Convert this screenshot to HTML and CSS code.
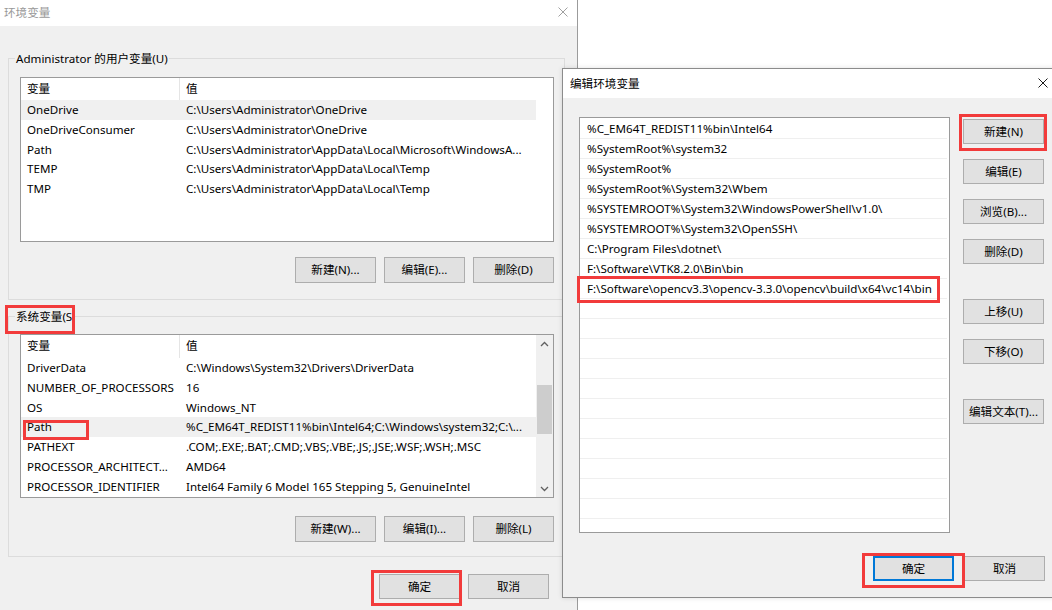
FILE: index.html
```html
<!DOCTYPE html>
<html lang="zh-CN">
<head>
<meta charset="utf-8">
<title>环境变量</title>
<link rel="stylesheet" href="styles.css">
</head>
<body>
<div class="desk">

  <div class="win win-env">
    <div class="titlebar">
      <span class="title">环境变量</span>
      <svg class="close" width="10" height="10" viewBox="0 0 10 10"><path d="M0.5 0.5L9.5 9.5M9.5 0.5L0.5 9.5" stroke="#a0a0a0" stroke-width="1" fill="none"/></svg>
    </div>
    <div class="env-body">
      <div class="group group-user">
        <span class="legend">Administrator 的用户变量(U)</span>
        <div class="list list-user">
          <div class="cols">
            <div class="lhead"><div class="c1">变量</div><div class="c2">值</div></div>
            <div class="row hot"><div class="c1">OneDrive</div><div class="c2">C:\Users\Administrator\OneDrive</div></div>
            <div class="row"><div class="c1">OneDriveConsumer</div><div class="c2">C:\Users\Administrator\OneDrive</div></div>
            <div class="row"><div class="c1">Path</div><div class="c2">C:\Users\Administrator\AppData\Local\Microsoft\WindowsA...</div></div>
            <div class="row"><div class="c1">TEMP</div><div class="c2">C:\Users\Administrator\AppData\Local\Temp</div></div>
            <div class="row"><div class="c1">TMP</div><div class="c2">C:\Users\Administrator\AppData\Local\Temp</div></div>
          </div>
          <div class="side"></div>
        </div>
        <div class="btns">
          <button class="btn">新建(N)...</button>
          <button class="btn">编辑(E)...</button>
          <button class="btn">删除(D)</button>
        </div>
      </div>

      <div class="group group-sys">
        <span class="legend">系统变量(S</span>
        <div class="list list-sys">
          <div class="cols">
            <div class="lhead"><div class="c1">变量</div><div class="c2">值</div></div>
            <div class="row"><div class="c1">DriverData</div><div class="c2">C:\Windows\System32\Drivers\DriverData</div></div>
            <div class="row"><div class="c1">NUMBER_OF_PROCESSORS</div><div class="c2">16</div></div>
            <div class="row"><div class="c1">OS</div><div class="c2">Windows_NT</div></div>
            <div class="row hot"><div class="c1">Path</div><div class="c2">%C_EM64T_REDIST11%bin\Intel64;C:\Windows\system32;C:\...</div></div>
            <div class="row"><div class="c1">PATHEXT</div><div class="c2">.COM;.EXE;.BAT;.CMD;.VBS;.VBE;.JS;.JSE;.WSF;.WSH;.MSC</div></div>
            <div class="row"><div class="c1">PROCESSOR_ARCHITECT...</div><div class="c2">AMD64</div></div>
            <div class="row"><div class="c1">PROCESSOR_IDENTIFIER</div><div class="c2">Intel64 Family 6 Model 165 Stepping 5, GenuineIntel</div></div>
          </div>
          <div class="side vscroll">
            <div class="sb-btn"><svg width="9" height="6" viewBox="0 0 9 6"><path d="M1 5L4.5 1.5L8 5" stroke="#606060" stroke-width="1.3" fill="none"/></svg></div>
            <div class="sb-track"><div class="sb-thumb"></div></div>
            <div class="sb-btn"><svg width="9" height="6" viewBox="0 0 9 6"><path d="M1 1L4.5 4.5L8 1" stroke="#606060" stroke-width="1.3" fill="none"/></svg></div>
          </div>
        </div>
        <div class="btns">
          <button class="btn">新建(W)...</button>
          <button class="btn">编辑(I)...</button>
          <button class="btn">删除(L)</button>
        </div>
      </div>

      <div class="footer env-footer">
        <button class="btn">确定</button>
        <button class="btn">取消</button>
      </div>
    </div>
  </div>

  <div class="win win-edit">
    <div class="titlebar">
      <span class="title">编辑环境变量</span>
      <svg class="close" width="10" height="10" viewBox="0 0 10 10"><path d="M0.5 0.5L9.5 9.5M9.5 0.5L0.5 9.5" stroke="#1a1a1a" stroke-width="1" fill="none"/></svg>
    </div>
    <div class="edit-body">
      <div class="edit-main">
        <div class="plist">
          <div class="prow">%C_EM64T_REDIST11%bin\Intel64</div>
          <div class="prow">%SystemRoot%\system32</div>
          <div class="prow">%SystemRoot%</div>
          <div class="prow">%SystemRoot%\System32\Wbem</div>
          <div class="prow">%SYSTEMROOT%\System32\WindowsPowerShell\v1.0\</div>
          <div class="prow">%SYSTEMROOT%\System32\OpenSSH\</div>
          <div class="prow">C:\Program Files\dotnet\</div>
          <div class="prow">F:\Software\VTK8.2.0\Bin\bin</div>
          <div class="prow">F:\Software\opencv3.3\opencv-3.3.0\opencv\build\x64\vc14\bin</div>
          <div class="prow"></div>
          <div class="prow"></div>
          <div class="prow"></div>
          <div class="prow"></div>
          <div class="prow"></div>
          <div class="prow"></div>
          <div class="prow"></div>
          <div class="prow"></div>
          <div class="prow"></div>
          <div class="prow"></div>
          <div class="prow"></div>
        </div>
        <div class="side-btns">
          <button class="btn">新建(N)</button>
          <button class="btn">编辑(E)</button>
          <button class="btn">浏览(B)...</button>
          <button class="btn">删除(D)</button>
          <button class="btn sep">上移(U)</button>
          <button class="btn">下移(O)</button>
          <button class="btn sep">编辑文本(T)...</button>
        </div>
      </div>
      <div class="footer edit-footer">
        <button class="btn default">确定</button>
        <button class="btn">取消</button>
      </div>
    </div>
  </div>

  <div class="mark mark-sys"></div>
  <div class="mark mark-path"></div>
  <div class="mark mark-ok1"></div>
  <div class="mark mark-opencv"></div>
  <div class="mark mark-new"></div>
  <div class="mark mark-ok2"></div>
</div>
</body>
</html>
```

FILE: styles.css
```css
* { box-sizing: border-box; }
html, body { margin: 0; padding: 0; }
body {
  width: 1052px;
  height: 610px;
  overflow: hidden;
  background: #ffffff;
  font-family: "Noto Sans", "Noto Sans CJK SC", sans-serif;
  font-size: 11.6px;
  color: #000;
}
.desk {
  position: relative;
  width: 1052px;
  height: 610px;
  overflow: hidden;
  background: #ffffff;
}

/* windows */
.win {
  position: absolute;
  display: flex;
  flex-direction: column;
  background: #f0f0f0;
  border: 1px solid #9b9b9b;
}
.win-env { left: -1px; top: -1px; width: 579px; height: 630px; }
.win-edit {
  left: 562px; top: 68px; width: 498px; height: 530px;
  border-color: #8c8c8c;
  box-shadow: 0 0 5px rgba(0,0,0,0.12);
}
.titlebar {
  flex: none;
  display: flex;
  align-items: center;
  justify-content: space-between;
  background: #ffffff;
}
.win-env .titlebar { height: 26px; padding: 0 9px 2px 4px; }
.win-env .title { color: #999999; }
.win-edit .titlebar { height: 29px; padding: 0 11px 1px 7px; }
.close { display: block; flex: none; }

/* left dialog body */
.env-body { padding: 32px 0 0 8px; display: flex; flex-direction: column; }
.group {
  position: relative;
  width: 557px;
  border: 1px solid #dcdcdc;
  display: flex;
  flex-direction: column;
  padding-left: 11px;
}
.group-user { height: 242px; padding-top: 18px; }
.group-sys { height: 241px; padding-top: 17px; margin-top: 16px; }
.legend {
  position: absolute;
  left: 6px;
  top: -8px;
  padding: 0 1px;
  line-height: 16px;
  background: #f0f0f0;
  white-space: nowrap;
}
.list {
  width: 534px;
  background: #ffffff;
  border: 1px solid #9a9a9a;
  display: flex;
  overflow: hidden;
}
.list-user { height: 165px; }
.list-sys { height: 164px; }
.cols { width: 515px; flex: none; }
.side { width: 17px; flex: none; }
.lhead { display: flex; height: 22px; line-height: 21px; }
.list-sys .lhead { height: 23px; line-height: 22px; }
.lhead .c1 { border-right: 1px solid #e5e5e5; }
.row { display: flex; height: 19.8px; line-height: 19.8px; white-space: nowrap; }
.row.hot { background: #f0f0f0; }
.c1 { width: 159px; flex: none; padding-left: 6px; overflow: hidden; white-space: nowrap; }
.c2 { flex: 1; padding-left: 6px; overflow: hidden; white-space: nowrap; }

.vscroll { background: #f0f0f0; display: flex; flex-direction: column; }
.sb-btn { height: 17px; flex: none; display: flex; align-items: center; justify-content: center; }
.sb-btn svg { display: block; }
.sb-track { flex: 1; padding: 0 1px; }
.sb-thumb { margin-top: 33px; height: 49px; background: #cdcdcd; }

.btns { display: flex; justify-content: flex-end; gap: 8px; width: 534px; }
.group-user .btns { margin-top: 15px; }
.group-sys .btns { margin-top: 18px; }

.btn {
  width: 81px;
  height: 26px;
  padding: 0;
  margin: 0;
  background: #e1e1e1;
  border: 1px solid #adadad;
  font: inherit;
  color: #000;
  text-align: center;
  line-height: 22px;
  white-space: nowrap;
}
.footer { display: flex; justify-content: flex-end; }
.footer .btn { height: 25px; }
.env-footer { margin-top: 17px; gap: 8px; padding-right: 28px; width: 569px; }

/* edit dialog */
.edit-body { width: 482px; padding: 19px 0 0 16px; display: flex; flex-direction: column; }
.edit-main { display: flex; gap: 13px; width: 466px; }
.plist {
  width: 371px;
  height: 416px;
  flex: none;
  background: #ffffff;
  border: 1px solid #9a9a9a;
  padding: 1px 2px 0 0;
  overflow: hidden;
}
.prow {
  height: 20px;
  line-height: 19px;
  padding-left: 7px;
  border-bottom: 1px solid #efefef;
  white-space: nowrap;
  overflow: hidden;
}
.side-btns { display: flex; flex-direction: column; gap: 15px; padding-top: 2px; }
.side-btns .btn { height: 25px; }
.side-btns .btn.sep { margin-top: 20px; }
.edit-footer { margin-top: 23px; gap: 10px; width: 466px; }
.btn.default { border-color: #0078d7; box-shadow: inset 0 0 0 1px #0078d7; }

/* red annotation boxes */
.mark { position: absolute; border: 3px solid #f23b3b; z-index: 5; }
.mark-sys { left: 5px; top: 305px; width: 70px; height: 29px; }
.mark-path { left: 23px; top: 420px; width: 66px; height: 20px; }
.mark-ok1 { left: 371px; top: 570px; width: 91px; height: 36px; }
.mark-opencv { left: 577px; top: 276px; width: 363px; height: 27px; }
.mark-new { left: 959px; top: 114px; width: 88px; height: 37px; }
.mark-ok2 { left: 862px; top: 553px; width: 103px; height: 35px; }
```
